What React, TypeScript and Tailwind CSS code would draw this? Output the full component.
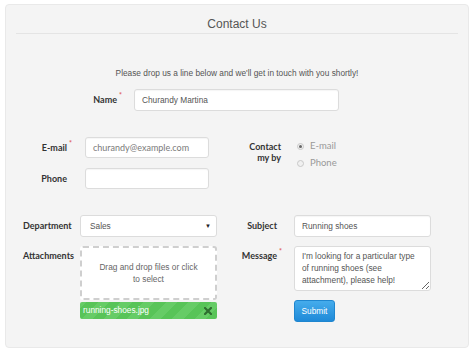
const ARIAL = "font-['Liberation_Sans',Arial,sans-serif]";
const LATO = "font-['Lato','Open_Sans',sans-serif]";

function Req() {
  return <span className="absolute -right-[5px] -top-[2px] text-[7px] leading-none text-[#e0605a]">*</span>;
}

function Label({ text, req = false }: { text: string; req?: boolean }) {
  return (
    <span className={`relative block ${LATO} text-[9px] font-bold leading-[12px] text-[#333]`}>
      {text}
      {req && <Req />}
    </span>
  );
}

function Field({ value, w, h = 21, pl = 7, font = ARIAL, color = 'text-[#555]', size = 'text-[8.3px]' }: {
  value?: string;
  w: string;
  h?: number;
  pl?: number;
  font?: string;
  color?: string;
  size?: string;
}) {
  return (
    <div
      className={`flex items-center rounded-[3px] border border-[#dcdcdc] bg-white shadow-[inset_0_1px_1px_rgba(0,0,0,0.04)] ${w} ${font} ${color} ${size}`}
      style={{ height: h, paddingLeft: pl }}
    >
      {value}
    </div>
  );
}

function Radio({ checked, label }: { checked?: boolean; label: string }) {
  return (
    <div className="flex h-[12px] items-center gap-[6px]">
      <span className="flex h-[7px] w-[7px] items-center justify-center rounded-full border border-[#c8c8c8] bg-[#f0f0f0]">
        {checked && <span className="h-[3px] w-[3px] rounded-full bg-[#666]" />}
      </span>
      <span className={`${LATO} text-[9.5px] leading-[12px] text-[#999]`}>{label}</span>
    </div>
  );
}

export default function App() {
  return (
    <div className="h-[352px] w-[474px] bg-white pl-[5px] pt-[4px]">
      <div className="h-[344px] w-[464px] rounded-[4px] border border-[#e9e9e9] bg-[#f4f4f4]">
        {/* Başlık */}
        <div className="mx-[10px] border-b border-[#e4e4e4] pt-[10px]">
          <div className={`${ARIAL} text-center text-[12px] leading-[18px] text-[#555]`}>Contact Us</div>
        </div>

        <p className={`${ARIAL} mt-[33px] text-center text-[8.3px] leading-[12px] text-[#555]`}>
          Please drop us a line below and we&apos;ll get in touch with you shortly!
        </p>

        {/* Name */}
        <div className="mt-[10px] flex items-center">
          <div className="flex w-[111px] justify-end">
            <Label text="Name" req />
          </div>
          <div className="ml-[17px]">
            <Field value="Churandy Martina" w="w-[205px]" h={22} />
          </div>
        </div>

        {/* E-mail / Phone + Contact my by */}
        <div className="mt-[26px] flex">
          <div className="flex flex-col gap-[10px]">
            <div className="flex items-center">
              <div className="flex w-[61px] justify-end">
                <Label text="E-mail" req />
              </div>
              <div className="ml-[18px]">
                <Field
                  value="churandy@example.com"
                  w="w-[124px]"
                  font={LATO}
                  color="text-[#7a7a7a]"
                  size="text-[9px]"
                />
              </div>
            </div>
            <div className="flex items-center">
              <div className="flex w-[61px] justify-end">
                <Label text="Phone" />
              </div>
              <div className="ml-[18px]">
                <Field w="w-[124px]" />
              </div>
            </div>
          </div>
          <div className="flex items-start">
            <div className={`mt-[4px] w-[72px] text-right ${LATO} text-[9px] font-bold leading-[11px] text-[#333]`}>
              Contact
              <br />
              my by
            </div>
            <div className="ml-[16px] mt-[3px] flex flex-col gap-[5px]">
              <Radio checked label="E-mail" />
              <Radio label="Phone" />
            </div>
          </div>
        </div>

        {/* Department / Subject */}
        <div className="mt-[26px] flex items-center">
          <div className="w-[74px] pl-[17px]">
            <Label text="Department" />
          </div>
          <div
            className={`flex h-[22px] w-[137px] items-center justify-between rounded-[3px] border border-[#dcdcdc] bg-white pl-[9px] pr-[5px] ${ARIAL} text-[8.3px] text-[#555]`}
          >
            <span>Sales</span>
            <span className="text-[6px] text-[#222]">▼</span>
          </div>
          <div className="flex w-[60px] justify-end">
            <Label text="Subject" />
          </div>
          <div className="ml-[17px]">
            <Field value="Running shoes" w="w-[137px]" h={22} />
          </div>
        </div>

        {/* Attachments / Message */}
        <div className="mt-[9px] flex items-start">
          <div className="w-[74px] pl-[17px] pt-[4px]">
            <Label text="Attachments" />
          </div>
          <div className="w-[137px]">
            <div
              className={`flex h-[54px] items-center justify-center rounded-[3px] border-2 border-dashed border-[#cfcfcf] bg-white px-[14px] text-center ${ARIAL} text-[8.3px] leading-[12px] text-[#666]`}
            >
              Drag and drop files or click
              <br />
              to select
            </div>
            <div
              className={`mt-[2px] flex h-[17px] items-center justify-between rounded-[2px] bg-[repeating-linear-gradient(-45deg,#58c458_0_8px,#66cc66_8px_16px)] pl-[3px] pr-[5px] ${ARIAL} text-[8.3px] text-white`}
            >
              <span>running-shoes.jpg</span>
              <svg width="8" height="8" viewBox="0 0 8 8">
                <path d="M1 1 L7 7 M7 1 L1 7" stroke="#2f6e30" strokeWidth="2.2" strokeLinecap="square" />
              </svg>
            </div>
          </div>
          <div className="flex w-[60px] justify-end pt-[4px]">
            <Label text="Message" req />
          </div>
          <div className="ml-[17px] flex flex-col">
            <textarea
              readOnly
              defaultValue="I'm looking for a particular type of running shoes (see attachment), please help!"
              className={`block h-[45px] w-[137px] resize rounded-[3px] border border-[#dcdcdc] bg-white px-[7px] py-[3px] ${ARIAL} text-[8.3px] leading-[12px] text-[#555] outline-none`}
            />
            <button
              className={`mt-[9px] h-[22px] w-[41px] rounded-[3px] border border-[#1f86cf] bg-[linear-gradient(#45acec,#1f8ad8)] ${ARIAL} text-[8.3px] text-white`}
            >
              Submit
            </button>
          </div>
        </div>
      </div>
    </div>
  );
}
